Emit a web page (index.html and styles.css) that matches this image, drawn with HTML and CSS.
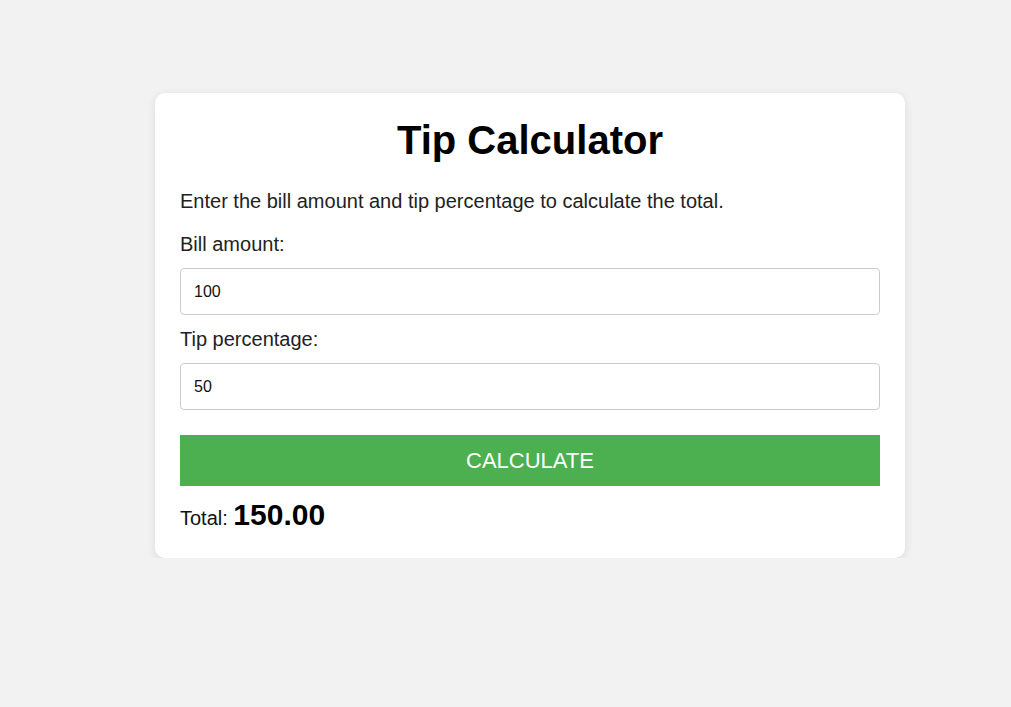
FILE: index.html
```html
<!DOCTYPE html>
<html lang="en">
<head>
<meta charset="utf-8">
<title>Tip Calculator</title>
<link rel="stylesheet" href="styles.css">
</head>
<body>
<main class="page">
  <section class="card">
    <h1 class="title">Tip Calculator</h1>
    <p class="intro">Enter the bill amount and tip percentage to calculate the total.</p>
    <label class="field-label" for="bill">Bill amount:</label>
    <input class="field-input" id="bill" type="number" value="100">
    <label class="field-label" for="tip">Tip percentage:</label>
    <input class="field-input" id="tip" type="number" value="50">
    <button class="calc-btn" type="button">CALCULATE</button>
    <p class="total">Total: <span class="total-value">150.00</span></p>
  </section>
</main>
</body>
</html>
```
FILE: styles.css
```css
html, body {
  margin: 0;
  padding: 0;
  background: #f2f2f2;
  font-family: "Liberation Sans", Arial, sans-serif;
  color: #222;
}

.page {
  padding: 93px 0 0 155px;
}

.card {
  width: 700px;
  background: #fff;
  border-radius: 10px;
  box-shadow: 0 2px 10px rgba(0, 0, 0, 0.1);
  padding: 24px 25px 26px;
  display: flex;
  flex-direction: column;
}

.title {
  margin: 0 0 27px;
  font-size: 40px;
  font-weight: bold;
  text-align: center;
  color: #000;
  line-height: 46px;
}

.intro {
  margin: 0 0 20px;
  font-size: 20px;
  line-height: 23px;
}

.field-label {
  display: block;
  font-size: 20px;
  line-height: 23px;
  margin-bottom: 12px;
}

.field-input {
  box-sizing: border-box;
  width: 100%;
  height: 47px;
  padding: 0 13px;
  border: 1px solid #ccc;
  border-radius: 4px;
  font-family: "Liberation Sans", Arial, sans-serif;
  font-size: 16px;
  color: #111;
  margin: 0 0 13px;
  background: #fff;
  -moz-appearance: textfield;
}

.field-input::-webkit-outer-spin-button,
.field-input::-webkit-inner-spin-button {
  -webkit-appearance: none;
  margin: 0;
}

.calc-btn {
  margin-top: 12px;
  height: 51px;
  width: 100%;
  border: none;
  border-radius: 0;
  background: #4caf50;
  color: #fff;
  font-family: "Liberation Sans", Arial, sans-serif;
  font-size: 22px;
  padding: 0;
  cursor: pointer;
}

.total {
  margin: 12px 0 0;
  font-size: 20px;
  color: #111;
}

.total-value {
  font-size: 30px;
  font-weight: bold;
  color: #000;
}
```
